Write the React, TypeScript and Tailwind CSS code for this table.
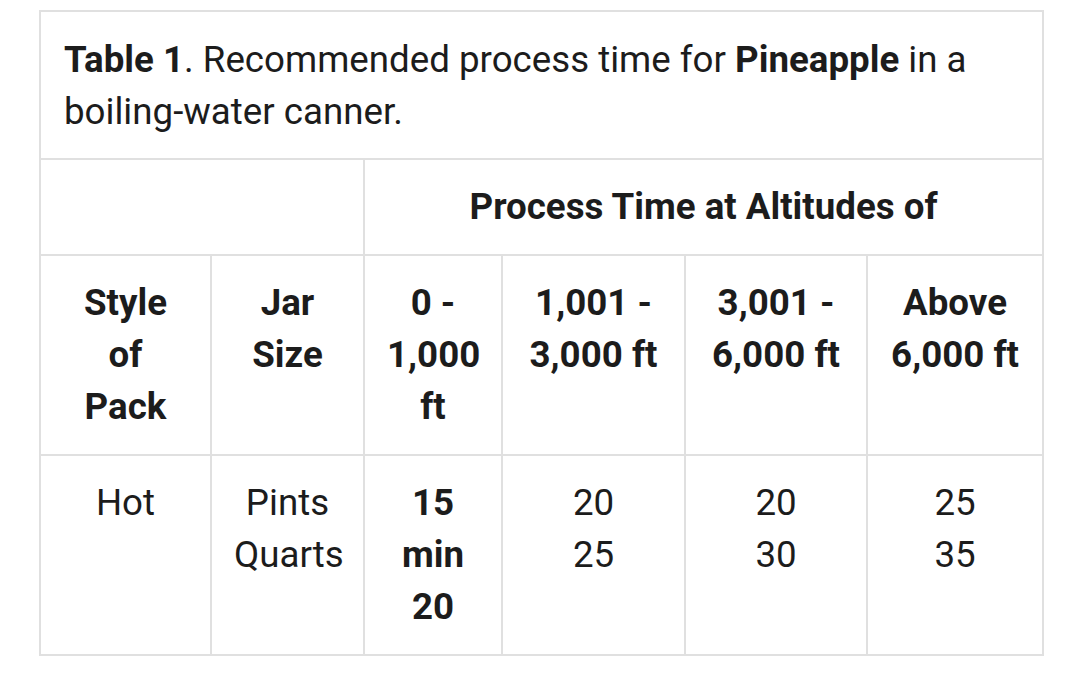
export default function App() {
  const cell = 'border-2 border-[#e0e0e0] px-[22px] py-[21px] text-center align-top'
  return (
    <div className="min-h-screen bg-white pt-[10px] pl-[39px] font-['Roboto',sans-serif] text-[36.7px] leading-[52px] text-[#1c1c1c]">
      <table className="w-[1003px] table-fixed border-collapse">
        <colgroup>
          <col className="w-[171px]" />
          <col className="w-[153px]" />
          <col className="w-[138px]" />
          <col className="w-[183px]" />
          <col className="w-[182px]" />
          <col className="w-[176px]" />
        </colgroup>
        <caption className="border-2 border-b-0 border-[#e0e0e0] px-[23px] pt-[22px] pb-[20px] text-left">
          <strong>Table 1</strong>. Recommended process time for <strong>Pineapple</strong> in a boiling-water canner.
        </caption>
        <thead>
          <tr>
            <th colSpan={2} className={cell}></th>
            <th colSpan={4} className={cell}>Process Time at Altitudes of</th>
          </tr>
          <tr>
            <th className={cell}>Style<br />of<br />Pack</th>
            <th className={cell}>Jar Size</th>
            <th className={cell}>0 - 1,000 ft</th>
            <th className={cell}>1,001 - 3,000 ft</th>
            <th className={cell}>3,001 - 6,000 ft</th>
            <th className={cell}>Above 6,000 ft</th>
          </tr>
        </thead>
        <tbody>
          <tr>
            <td className={cell}>Hot</td>
            <td className={cell}>Pints<br />Quarts</td>
            <td className={`${cell} font-bold`}>15 min 20</td>
            <td className={cell}>20<br />25</td>
            <td className={cell}>20<br />30</td>
            <td className={cell}>25<br />35</td>
          </tr>
        </tbody>
      </table>
    </div>
  )
}
